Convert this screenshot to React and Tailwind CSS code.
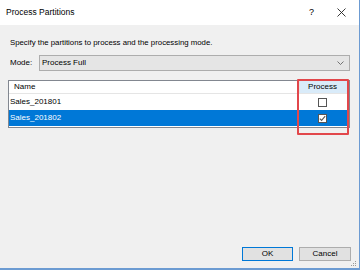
import { useState } from "react";

const rows = [
  { name: "Sales_201801", process: false },
  { name: "Sales_201802", process: true },
];

function CheckBox({ checked }) {
  return (
    <div className="w-[9px] h-[9px] border border-[#555555] bg-white flex items-center justify-center">
      {checked && (
        <svg width="7" height="7" viewBox="0 0 7 7">
          <path d="M0.8 3.6 L2.6 5.4 L6.2 1.2" fill="none" stroke="#555" strokeWidth="1.1" />
        </svg>
      )}
    </div>
  );
}

export default function App() {
  const [selected] = useState(1);

  return (
    <div className="relative w-[360px] h-[270px] bg-[#f0f0f0] flex flex-col border-r border-b-2 border-[#6c9bd2] font-['Liberation_Sans',Arial,sans-serif] text-black">
      {/* title bar */}
      <div className="h-[25px] bg-white flex items-center pl-[6px] shrink-0">
        <span className="text-[8.5px] leading-none">Process Partitions</span>
        <span className="ml-auto text-[9px] leading-none mr-[23px]">?</span>
        <svg width="9" height="9" viewBox="0 0 9 9" className="mr-[13px]">
          <path d="M0.5 0.5 L8.5 8.5 M8.5 0.5 L0.5 8.5" stroke="#222" strokeWidth="0.9" />
        </svg>
      </div>

      <div className="flex-1 flex flex-col pl-[8px] pr-[8px]">
        <div className="mt-[12px] pl-[2px] text-[7.8px] leading-[12px]">
          Specify the partitions to process and the processing mode.
        </div>

        <div className="mt-[6px] flex items-center pl-[2px] pr-[1px]">
          <span className="w-[29px] text-[8px]">Mode:</span>
          <div className="flex-1 h-[16px] bg-[#e5e5e5] border border-[#adadad] flex items-center pl-[2px] pr-[5px]">
            <span className="text-[8px]">Process Full</span>
            <svg width="7" height="4" viewBox="0 0 7 4" className="ml-auto">
              <path d="M0.5 0.5 L3.5 3.5 L6.5 0.5" fill="none" stroke="#555" strokeWidth="0.8" />
            </svg>
          </div>
        </div>

        {/* partitions grid */}
        <div className="relative mt-[9px] mr-[1px]">
          <div className="border border-[#828790] bg-white text-[8px]">
            <div className="flex h-[13px] border-b border-[#e5e5e5]">
              <div className="flex-1 flex items-center pl-[5px] border-r border-[#e5e5e5]">Name</div>
              <div className="w-[49px] flex items-center justify-center bg-[#d9ebf9] pr-[4px]">Process</div>
            </div>
            {rows.map((row, i) => (
              <div
                key={row.name}
                className={`flex items-center h-[16px] ${
                  i === selected ? "bg-[#0078d7] text-white" : "bg-white"
                }`}
              >
                <div className="flex-1 pl-[1px]">{row.name}</div>
                <div className="w-[49px] flex justify-center pr-[4px]">
                  <CheckBox checked={row.process} />
                </div>
              </div>
            ))}
            <div className="h-[1px]" />
          </div>
          {/* red highlight around the Process column */}
          <div className="absolute left-[289px] top-[-1px] w-[52px] h-[56px] border-2 border-[#e2474b] rounded-[1px]" />
        </div>

        <div className="mt-auto mb-[7px] flex justify-end gap-[6px]">
          <button className="w-[51px] h-[14px] bg-[#e1e1e1] border border-[#0078d7] text-[8px] leading-none">OK</button>
          <button className="w-[52px] h-[14px] bg-[#e1e1e1] border border-[#adadad] text-[8px] leading-none">Cancel</button>
        </div>
      </div>

      {/* resize grip */}
      <svg width="6" height="6" viewBox="0 0 6 6" className="absolute right-[2px] bottom-[1px]">
        <rect x="4" y="0" width="1" height="1" fill="#999" />
        <rect x="2" y="2" width="1" height="1" fill="#999" />
        <rect x="4" y="2" width="1" height="1" fill="#999" />
        <rect x="0" y="4" width="1" height="1" fill="#999" />
        <rect x="2" y="4" width="1" height="1" fill="#999" />
        <rect x="4" y="4" width="1" height="1" fill="#999" />
      </svg>
    </div>
  );
}
